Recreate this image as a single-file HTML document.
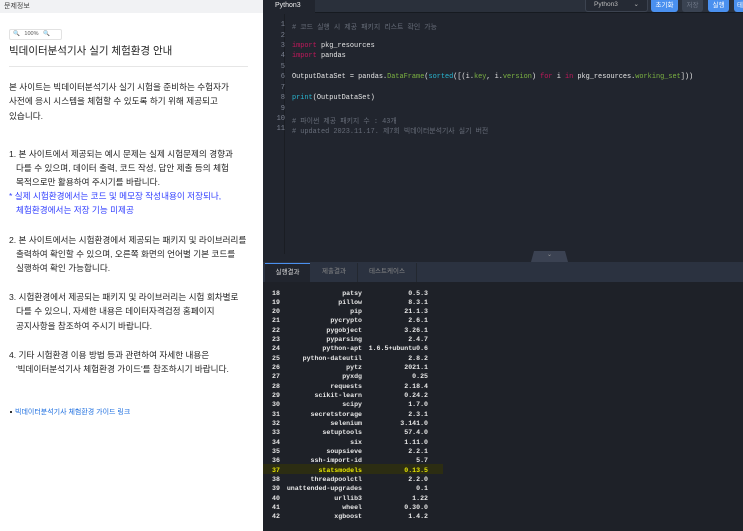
<!DOCTYPE html>
<html><head><meta charset="utf-8"><style>
*{margin:0;padding:0;box-sizing:border-box}
body{width:743px;height:531px;overflow:hidden;position:relative;font-family:"Liberation Sans","Noto Sans CJK KR",sans-serif;background:#fff}
.abs{position:absolute;white-space:nowrap}
#left{position:absolute;left:0;top:0;width:263px;height:531px;background:#fff}
#lh{position:absolute;left:0;top:0;width:263px;height:13px;background:#f1f2f4;font-size:7px;color:#444;padding:1px 0 0 4px}
.p{position:absolute;left:9px;font-size:8.6px;color:#222;white-space:nowrap}
.b{color:#2f3dff}
#right{position:absolute;left:263px;top:0;width:480px;height:531px;background:#21252e}
.mono{font-family:"Liberation Mono","Noto Sans CJK KR",monospace}
.ln{position:absolute;left:0;width:22px;text-align:right;font-size:7px;color:#7b8190}
.cd{position:absolute;left:29px;font-size:6.9px;color:#e6e6e6;white-space:pre}
.cm{color:#666c78}.kw{color:#c2185b}.fn{color:#7cb342}.bi{color:#29b6d1}
.btn{position:absolute;top:0;height:12px;border-radius:0 0 3px 3px;font-size:6.5px;color:#fff;text-align:center;line-height:11px}
.r{position:absolute;font-size:6.6px;font-weight:bold;color:#e8e8e8;white-space:pre}
</style></head><body>
<div id="left">
<div id="lh">문제정보</div>
<div class="abs" style="left:9px;top:29px;width:53px;height:11px;border:1px solid #e2e2e2;border-radius:2px;font-size:5.5px;color:#555;line-height:9px;padding-left:3px">🔍&nbsp;&nbsp;&nbsp;100%&nbsp;&nbsp;&nbsp;🔍</div>
<div class="abs" style="left:9px;top:43px;font-size:10.5px;color:#222">빅데이터분석기사 실기 체험환경 안내</div>
<div class="abs" style="left:9px;top:66px;width:239px;height:1px;background:#e6e6e6"></div>
<div class="p" style="top:81px">본 사이트는 빅데이터분석기사 실기 시험을 준비하는 수험자가</div>
<div class="p" style="top:95px">사전에 응시 시스템을 체험할 수 있도록 하기 위해 제공되고</div>
<div class="p" style="top:110px">있습니다.</div>
<div class="p" style="top:148px">1. 본 사이트에서 제공되는 예시 문제는 실제 시험문제의 경향과</div>
<div class="p" style="top:162px;left:16px">다를 수 있으며, 데이터 출력, 코드 작성, 답안 제출 등의 체험</div>
<div class="p" style="top:176px;left:16px">목적으로만 활용하여 주시기를 바랍니다.</div>
<div class="p b" style="top:190px">* 실제 시험환경에서는 코드 및 메모장 작성내용이 저장되나,</div>
<div class="p b" style="top:204px;left:16px">체험환경에서는 저장 기능 미제공</div>
<div class="p" style="top:234px">2. 본 사이트에서는 시험환경에서 제공되는 패키지 및 라이브러리를</div>
<div class="p" style="top:248px;left:16px">출력하여 확인할 수 있으며, 오른쪽 화면의 언어별 기본 코드를</div>
<div class="p" style="top:262px;left:16px">실행하여 확인 가능합니다.</div>
<div class="p" style="top:291px">3. 시험환경에서 제공되는 패키지 및 라이브러리는 시험 회차별로</div>
<div class="p" style="top:305px;left:16px">다를 수 있으니, 자세한 내용은 데이터자격검정 홈페이지</div>
<div class="p" style="top:320px;left:16px">공지사항을 참조하여 주시기 바랍니다.</div>
<div class="p" style="top:349px">4. 기타 시험환경 이용 방법 등과 관련하여 자세한 내용은</div>
<div class="p" style="top:363px;left:16px">'빅데이터분석기사 체험환경 가이드'를 참조하시기 바랍니다.</div>
<div class="abs" style="left:10px;top:411px;width:2px;height:2px;background:#333"></div>
<div class="abs" style="left:15px;top:407px;font-size:7px;color:#1e6fe0">빅데이터분석기사 체험환경 가이드 링크</div>
</div>
<div id="right">
<div class="abs" style="left:0;top:0;width:480px;height:13px;background:#2a303b;border-bottom:1px solid #161a20"></div>
<div class="abs" style="left:0;top:0;width:52px;height:13px;background:#21252e;font-size:7px;color:#eee;line-height:12px;padding-left:12px">Python3</div>
<div class="abs" style="left:322px;top:0;width:63px;height:12px;background:#252a34;border:1px solid #3c4350;border-top:none;border-radius:0 0 3px 3px;font-size:6.5px;color:#bbb;line-height:10px;padding-left:8px">Python3<span style="position:absolute;right:8px">⌄</span></div>
<div class="btn" style="left:388px;width:27px;background:#4a90ef">초기화</div>
<div class="btn" style="left:419px;width:21px;background:#3a4352;color:#707888">저장</div>
<div class="btn" style="left:445px;width:21px;background:#4a90ef">실행</div>
<div class="btn" style="left:471px;width:12px;background:#4a90ef">테</div>
<div class="abs" style="left:0;top:14px;width:22px;height:240px;border-right:1px solid #1a1d23"></div>
<div class="mono">
<div class="ln" style="top:21px">1</div><div class="cd" style="top:21px"><span class="cm"># 코드 실행 시 제공 패키지 리스트 확인 가능</span></div>
<div class="ln" style="top:32px">2</div>
<div class="ln" style="top:42px">3</div><div class="cd" style="top:42px"><span class="kw">import</span> pkg_resources</div>
<div class="ln" style="top:52px">4</div><div class="cd" style="top:52px"><span class="kw">import</span> pandas</div>
<div class="ln" style="top:63px">5</div>
<div class="ln" style="top:73px">6</div><div class="cd" style="top:73px">OutputDataSet = pandas.<span class="fn">DataFrame</span>(<span class="bi">sorted</span>([(i.<span class="fn">key</span>, i.<span class="fn">version</span>) <span class="kw">for</span> i <span class="kw">in</span> pkg_resources.<span class="fn">working_set</span>]))</div>
<div class="ln" style="top:84px">7</div>
<div class="ln" style="top:94px">8</div><div class="cd" style="top:94px"><span class="bi">print</span>(OutputDataSet)</div>
<div class="ln" style="top:105px">9</div>
<div class="ln" style="top:115px">10</div><div class="cd" style="top:115px"><span class="cm"># 파이썬 제공 패키지 수 : 43개</span></div>
<div class="ln" style="top:125px">11</div><div class="cd" style="top:125px"><span class="cm"># updated 2023.11.17. 제7회 빅데이터분석기사 실기 버전</span></div>
</div>
<div class="abs" style="left:268px;top:251px;width:37px;height:11px;background:#3b4252;clip-path:polygon(3px 0,34px 0,37px 11px,0 11px);font-size:6px;color:#999;text-align:center;line-height:9px">⌄</div>
<div class="abs" style="left:0;top:262px;width:480px;height:20px;background:#2b3240"></div>
<div class="abs" style="left:2px;top:263px;width:45px;height:19px;background:#21252e;border-top:1px solid #4a90ef;font-size:6.5px;color:#ddd;text-align:center;line-height:17px">실행결과</div>
<div class="abs" style="left:48px;top:263px;width:47px;height:19px;font-size:6.5px;color:#888;text-align:center;line-height:17px;border-right:1px solid #232830">제출결과</div>
<div class="abs" style="left:95px;top:263px;width:59px;height:19px;font-size:6.5px;color:#888;text-align:center;line-height:17px;border-right:1px solid #232830">테스트케이스</div>
<div class="abs" style="left:0;top:282px;width:480px;height:249px;background:#1e2128"></div>
<div class="abs" style="left:0;top:464px;width:180px;height:10px;background:#2c2d12"></div>
<div class="mono" id="rows"></div>
</div>
<script>
var d=[["18","patsy","0.5.3"],["19","pillow","8.3.1"],["20","pip","21.1.3"],["21","pycrypto","2.6.1"],["22","pygobject","3.26.1"],["23","pyparsing","2.4.7"],["24","python-apt","1.6.5+ubuntu0.6"],["25","python-dateutil","2.8.2"],["26","pytz","2021.1"],["27","pyxdg","0.25"],["28","requests","2.18.4"],["29","scikit-learn","0.24.2"],["30","scipy","1.7.0"],["31","secretstorage","2.3.1"],["32","selenium","3.141.0"],["33","setuptools","57.4.0"],["34","six","1.11.0"],["35","soupsieve","2.2.1"],["36","ssh-import-id","5.7"],["37","statsmodels","0.13.5"],["38","threadpoolctl","2.2.0"],["39","unattended-upgrades","0.1"],["40","urllib3","1.22"],["41","wheel","0.30.0"],["42","xgboost","1.4.2"]];
var h="";d.forEach(function(r,i){var t=289.5+i*9.33;var c=r[0]=="37"?"color:#e6e600":"";
h+='<div class="r" style="top:'+t+'px;left:9px;'+c+'">'+r[0]+'</div><div class="r" style="top:'+t+'px;right:381px;'+c+'">'+r[1]+'</div><div class="r" style="top:'+t+'px;right:315px;'+c+'">'+r[2]+'</div>';});
document.getElementById("rows").innerHTML=h;
</script>
</body></html>
